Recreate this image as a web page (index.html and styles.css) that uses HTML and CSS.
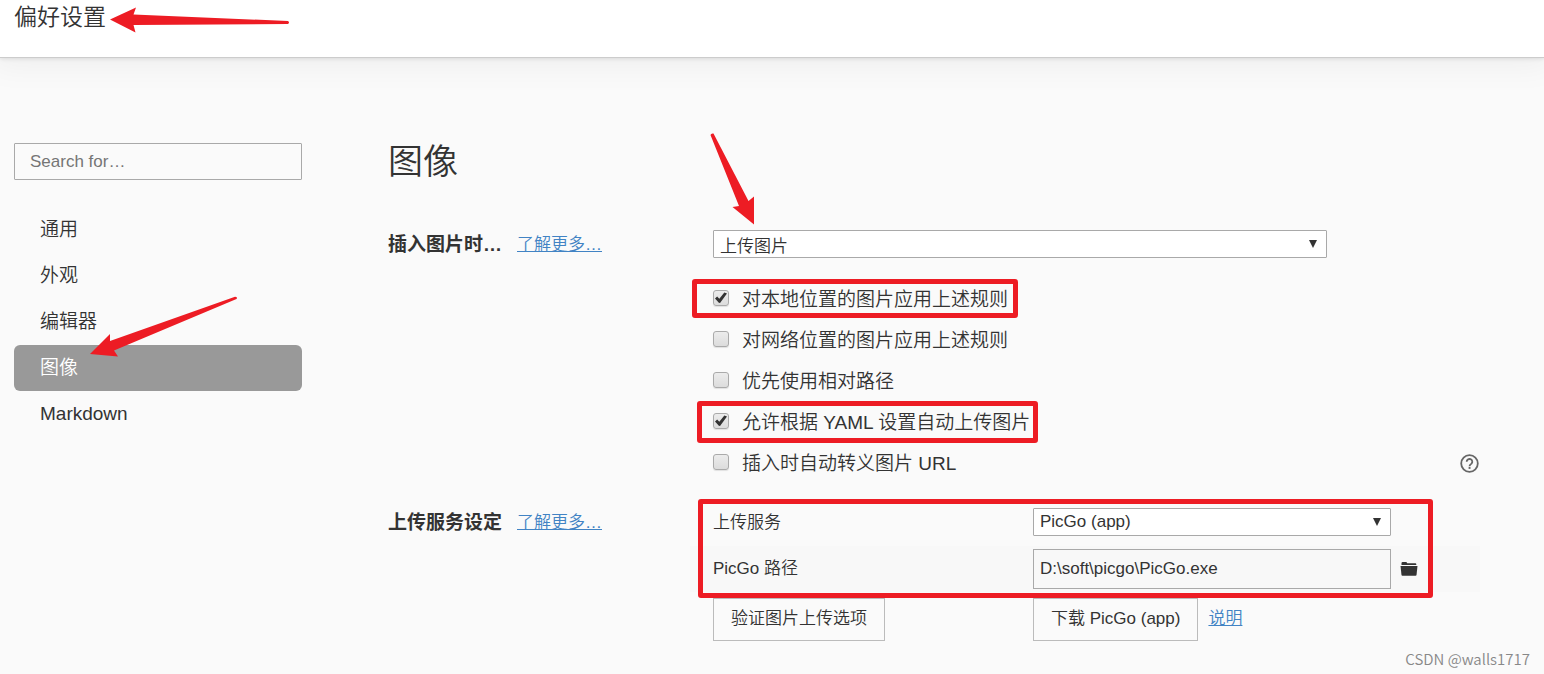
FILE: index.html
```html
<!DOCTYPE html>
<html lang="zh-CN">
<head>
    <meta charset="UTF-8">
    <meta name="viewport" content="width=device-width, initial-scale=1.0">
    <title>偏好设置</title>
    <link rel="stylesheet" href="styles.css">
</head>
<body>
    <header class="header">
        <div class="header-title">
            偏好设置
            <svg class="arrow arrow-title" width="180" height="26" viewBox="0 0 180 26" aria-hidden="true">
                <path d="M0 12.5 L26 .5 L23.5 7.5 L178 14 Q180 15.500 178 17 L23.5 18 L25.500 25.500 Z"/>
            </svg>
        </div>
    </header>

    <div class="layout">
        <!-- Sidebar -->
        <aside class="sidebar">
            <input class="search" type="text" placeholder="Search for…" aria-label="Search">
            <nav class="menu">
                <a href="#general">通用</a>
                <a href="#appearance">外观</a>
                <a href="#editor">编辑器</a>
                <a href="#image" class="active">图像
                    <svg class="arrow arrow-menu" width="148" height="62" viewBox="0 0 148 62" aria-hidden="true">
                        <path d="M0 58 L20 38 L20 45 L145 .7 Q148 1 146.500 3 L24 54.500 L28 60.500 Z"/>
                    </svg>
                </a>
                <a href="#markdown">Markdown</a>
            </nav>
        </aside>

        <!-- Image settings -->
        <main class="content">
            <h1>图像</h1>

            <section class="group">
                <div class="group-title">
                    <h2>插入图片时…</h2>
                    <a href="#insert-help">了解更多…</a>
                </div>
                <div class="group-body">
                    <div class="select-box insert-box">
                        <select aria-label="插入图片时">
                            <option>上传图片</option>
                        </select>
                        <svg class="arrow arrow-select" width="46" height="92" viewBox="0 0 46 92" aria-hidden="true">
                            <path d="M.5 2 Q1 0 3.500 .5 L38.500 68 L44 63.500 L44 91.500 L22.500 74 L29 73 Z"/>
                        </svg>
                    </div>
                    <div class="options">
                        <div class="option">
                            <label class="marked mark-local"><input type="checkbox" checked>对本地位置的图片应用上述规则</label>
                        </div>
                        <div class="option">
                            <label><input type="checkbox">对网络位置的图片应用上述规则</label>
                        </div>
                        <div class="option">
                            <label><input type="checkbox">优先使用相对路径</label>
                        </div>
                        <div class="option">
                            <label class="marked mark-yaml"><input type="checkbox" checked>允许根据 YAML 设置自动上传图片</label>
                        </div>
                        <div class="option">
                            <label><input type="checkbox">插入时自动转义图片 URL</label>
                            <button class="icon-btn" type="button" aria-label="帮助">
                                <svg width="20" height="20" viewBox="0 0 20 20">
                                    <circle cx="9.500" cy="9.500" r="8.300" fill="none" stroke="#666" stroke-width="1.800"/>
                                    <path d="M6.700 7.800 A2.800 2.700 0 1 1 11.500 9.600 C10.200 10.600 9.500 11 9.500 12.300" fill="none" stroke="#666" stroke-width="1.800"/>
                                    <rect x="8.600" y="13" width="1.900" height="1.900" fill="#666"/>
                                </svg>
                            </button>
                        </div>
                    </div>
                </div>
            </section>

            <section class="group">
                <div class="group-title upload-title">
                    <h2>上传服务设定</h2>
                    <a href="#upload-help">了解更多…</a>
                </div>
                <div class="group-body upload">
                    <div class="marked mark-service">
                        <div class="row">
                            <label class="row-label" for="service">上传服务</label>
                            <div class="select-box service-box">
                                <select id="service">
                                    <option>PicGo (app)</option>
                                </select>
                            </div>
                        </div>
                        <div class="row striped">
                            <label class="row-label" for="path">PicGo 路径</label>
                            <input class="path" id="path" type="text" value="D:\soft\picgo\PicGo.exe">
                            <button class="icon-btn" type="button" aria-label="选择文件">
                                <svg width="18" height="16" viewBox="0 0 18 16" fill="#333">
                                    <path d="M1.500 4 V2.200 Q1.500 1 2.700 1 H6 Q6.800 1 7.200 2.200 H15.300 Q16.300 2.200 16.300 3.200 V4 Z"/>
                                    <path d="M.5 5 H17.500 L16.500 14 Q16.400 14.700 15.600 14.700 H2.400 Q1.600 14.700 1.500 14 Z"/>
                                </svg>
                            </button>
                        </div>
                    </div>
                    <div class="row actions">
                        <div class="row-label"><button class="btn" type="button">验证图片上传选项</button></div>
                        <button class="btn" type="button">下载 PicGo (app)</button>
                        <a href="#picgo">说明</a>
                    </div>
                </div>
            </section>
        </main>
    </div>

    <div class="watermark">CSDN @walls1717</div>
</body>
</html>
```
FILE: styles.css
```css
:root {
    --text: #333;
    --link: #4183c4;
    --border: #a9a9a9;
    --mark: #ed1c24;
    --bg: #fafafa;
}

* {
    margin: 0;
    padding: 0;
    box-sizing: border-box;
}

body {
    position: relative;
    min-height: 100vh;
    background: var(--bg);
    color: var(--text);
    font-family: "Liberation Sans", "Noto Sans CJK SC", sans-serif;
    font-size: 17px;
    font-weight: 350;
    line-height: 24px;
}

input, select, button {
    font: inherit;
    color: inherit;
}

a {
    color: var(--link);
}

/* Header */
.header {
    height: 58px;
    padding: 0 14px;
    background: #fff;
    border-bottom: 1px solid #ccc;
    box-shadow: 0 1px 4px rgba(0, 0, 0, 0.1), 0 0 32px 8px rgba(0, 0, 0, 0.05);
}

.header-title {
    position: relative;
    width: max-content;
    font-size: 23px;
    line-height: 34px;
}

/* Red annotations */
.arrow {
    position: absolute;
    fill: var(--mark);
    pointer-events: none;
}

.arrow-title {
    left: 96px;
    top: 7px;
}

.arrow-menu {
    left: 76px;
    top: -49px;
}

.arrow-select {
    left: -3px;
    top: -97px;
}

.marked {
    position: relative;
}

.marked::after {
    content: "";
    position: absolute;
    border: 5px solid var(--mark);
    border-radius: 3px;
    pointer-events: none;
}

.mark-local::after {
    inset: 0 -10px 2px -21px;
}

.mark-yaml::after {
    inset: -1px -8px 0 -16px;
}

.mark-service::after {
    inset: -1px 47px -6px 8px;
}

/* Layout */
.layout {
    display: grid;
    grid-template-columns: 288px 1fr;
    gap: 86px;
    padding: 78px 64px 24px 14px;
}

.sidebar {
    padding-top: 7px;
}

.search {
    display: block;
    width: 100%;
    height: 37px;
    padding: 0 15px;
    background: transparent;
    border: 1px solid var(--border);
    border-radius: 1px;
}

.search::placeholder {
    color: #757575;
    opacity: 1;
}

.menu {
    margin-top: 27px;
}

.menu a {
    display: block;
    position: relative;
    padding: 0 26px;
    border-radius: 6px;
    color: var(--text);
    font-size: 19px;
    line-height: 46px;
    text-decoration: none;
}

.menu a.active {
    background: #999;
    color: #fff;
}

/* Content */
h1 {
    margin-bottom: 42px;
    font-size: 35px;
    font-weight: 350;
    line-height: 52px;
}

h2 {
    font-size: 19px;
    font-weight: bold;
    line-height: 28px;
}

.group {
    display: grid;
    grid-template-columns: 325px 1fr;
}

.group + .group {
    margin-top: 16px;
}

.group-title {
    display: flex;
    align-items: center;
    align-self: start;
    gap: 15px;
    height: 30px;
}

.upload-title {
    height: 46px;
}

.select-box {
    position: relative;
}

.select-box::after {
    content: "";
    position: absolute;
    top: 10px;
    right: 10px;
    border: 4px solid transparent;
    border-top: 8px solid var(--text);
    border-bottom: 0;
    pointer-events: none;
}

.select-box select {
    display: block;
    width: 100%;
    height: 28px;
    padding: 0 6px;
    appearance: none;
    background: #fff;
    border: 1px solid var(--border);
    border-radius: 1px;
}

.insert-box {
    width: 80%;
}

.insert-box select {
    padding-top: 4px;
}

.options {
    margin-top: 21px;
}

.option {
    display: flex;
    align-items: center;
    justify-content: space-between;
    height: 41px;
}

.option label {
    display: flex;
    position: relative;
    align-items: center;
    gap: 13px;
    height: 41px;
    font-size: 19px;
}

.option input {
    width: 16px;
    height: 16px;
    margin-bottom: 3px;
    appearance: none;
    background: linear-gradient(#ececec, #dcdcdc);
    border: 1px solid #aaa;
    border-radius: 3px;
    box-shadow: 0 1px 1px rgba(0, 0, 0, 0.1);
}

.option input:checked::before {
    content: "";
    display: block;
    width: 12px;
    height: 11px;
    margin: 1px;
    background: #333;
    clip-path: polygon(0 60%, 18% 42%, 36% 62%, 78% 4%, 100% 14%, 42% 100%, 32% 98%);
}

.icon-btn {
    display: flex;
    background: none;
    border: 0;
    cursor: pointer;
}

/* Upload settings */
.upload {
    margin-left: -23px;
}

.row {
    display: flex;
    align-items: center;
    height: 46px;
    padding-left: 23px;
}

.row.striped {
    background: #f8f8f8;
}

.row-label {
    flex: 0 0 320px;
}

.service-box, .path {
    flex: 0 1 358px;
}

.service-box {
    margin-bottom: 2px;
}

.path {
    min-width: 0;
    height: 40px;
    margin-right: 9px;
    padding: 0 6px;
    background: transparent;
    border: 1px solid var(--border);
}

.actions {
    height: 54px;
}

.btn {
    height: 43px;
    padding: 0 17px;
    background: transparent;
    border: 1px solid #bbb;
    cursor: pointer;
}

.actions a {
    margin-left: 10px;
}

.watermark {
    position: absolute;
    right: 14px;
    bottom: 4px;
    color: #888;
    font-family: "Noto Sans CJK SC", sans-serif;
    font-size: 15px;
    line-height: 22px;
}
```
